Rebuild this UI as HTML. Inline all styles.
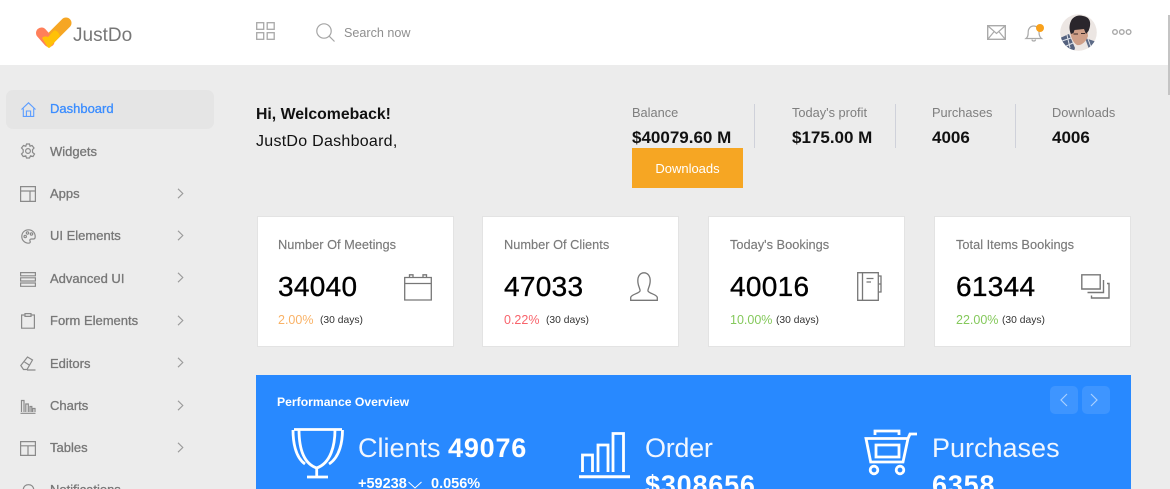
<!DOCTYPE html>
<html style="width:1170px;height:489px;overflow:hidden"><head><meta charset="utf-8">
<style>
html,body{margin:0;padding:0}
body{width:1170px;height:489px;overflow:hidden;background:#ececec;position:relative;font-family:"Liberation Sans",sans-serif;color:#000}
#r{position:absolute;left:0;top:0;width:1170px;height:489px;overflow:hidden;background:#ececec}
.a{position:absolute;white-space:nowrap}
svg{position:absolute;overflow:visible}
.m{left:50px;font-size:13px;color:#777;line-height:16px;-webkit-text-stroke:.3px #777}
.card{position:absolute;top:216px;width:195px;height:129px;background:#fff;border:1px solid #e3e3e3}
.ct{font-size:12.8px;color:#7a7a7a;line-height:16px;-webkit-text-stroke:.15px #7a7a7a}
.num{font-size:28px;color:#000;line-height:32px;letter-spacing:.3px;-webkit-text-stroke:.35px #000}
.pct{font-size:12.5px;line-height:16px}
.d{font-size:10.3px;color:#333;line-height:16px}
.sl{font-size:12.8px;color:#7e7e7e;line-height:16px}
.sv{font-size:17px;font-weight:700;line-height:20px;color:#111}
.big{font-size:27px;color:#f0f6ff;line-height:32px}
.i{fill:none;stroke:#8a8a8a;stroke-width:1.2}
.ch{fill:none;stroke:#9a9a9a;stroke-width:1.1}
.ci{fill:none;stroke:#777;stroke-width:1.3}
.w{fill:none;stroke:#fff;stroke-width:2.8}
</style></head><body><div id="r">

<!-- header -->
<div class="a" style="left:0;top:0;width:1170px;height:65px;background:#fff"></div>
<svg style="left:0;top:0" width="100" height="60">
<path d="M52 37L66 23" stroke="#f6a623" stroke-width="11" stroke-linecap="round" fill="none"/>
<path d="M41.5 33L49 41.5" stroke="#ff7f5a" stroke-width="11" stroke-linecap="round" fill="none"/>
<path d="M42 38C44 36 46 36 48 37L54 30.5C57 30 59 33 60 36L50.5 47C49.5 48.2 48.5 48.2 47.5 47Z" fill="#ffc107"/>
</svg>
<div class="a" style="left:73px;top:24px;font-size:19px;color:#777;line-height:24px">JustDo</div>
<svg style="left:256px;top:22px" width="20" height="19"><g fill="none" stroke="#a8a8a8" stroke-width="1.3"><rect x=".7" y=".7" width="7" height="6.6"/><rect x="11.2" y=".7" width="7" height="6.6"/><rect x=".7" y="10.7" width="7" height="6.6"/><rect x="11.2" y="10.7" width="7" height="6.6"/></g></svg>
<svg style="left:316px;top:23px" width="20" height="19"><circle cx="8" cy="8" r="7.2" fill="none" stroke="#a5a5a5" stroke-width="1.2"/><path d="M13.2 13.2L18.5 18.5" stroke="#a5a5a5" stroke-width="1.2"/></svg>
<div class="a" style="left:344px;top:25px;font-size:12.6px;color:#8f8f8f;line-height:16px">Search now</div>

<svg style="left:987px;top:25px" width="19" height="15"><rect x=".7" y=".7" width="17.6" height="13.6" fill="none" stroke="#aaa" stroke-width="1.4"/><path d="M1 1L9.5 8.5L18 1M1 14L7 6.8M18 14L12 6.8" fill="none" stroke="#aaa" stroke-width="1.2"/></svg>
<svg style="left:1025px;top:24px" width="18" height="18"><path d="M1 14.5C3 13 3.2 11 3.2 8C3.2 4.5 5.5 2 8.7 2C12 2 14 4.5 14 8C14 11 14.5 13 16.5 14.5Z" fill="none" stroke="#aaa" stroke-width="1.2"/><path d="M7 15.5C7 17.5 10.5 17.5 10.5 15.5" fill="none" stroke="#aaa" stroke-width="1.2"/></svg>
<div class="a" style="left:1036px;top:24px;width:8px;height:8px;border-radius:50%;background:#f9a11b"></div>
<svg style="left:1060px;top:14px" width="37" height="37" viewBox="0 0 37 37">
<defs><clipPath id="c"><circle cx="18.5" cy="18.5" r="18.3"/></clipPath></defs>
<g clip-path="url(#c)"><rect width="37" height="37" fill="#ece6e3"/>
<path d="M0 24L9 20L15 34L14 37H0Z" fill="#54617e"/>
<path d="M25 24L37 28V33L29 35Z" fill="#5c6a86"/>
<path d="M2 27L11 24M4 33L13 29M7 21L10 34M28 25L31 33" stroke="#dfe3ea" stroke-width="1" fill="none"/>
<path d="M10 15L27 14L28 22C26 28 21 32 17 31C13 29 10 22 10 15Z" fill="#cf9f88"/>
<path d="M11 20L13.5 19L14.5 16L24 15L26 20L28.5 17C32 9 30 3 23 2C17 0 12 4 11 7C9 11 9 16 11 20Z" fill="#2a262c"/>
<path d="M13.5 20H18M21 19.5H25" stroke="#3a2a28" stroke-width="1"/>
</g></svg>
<svg style="left:1112px;top:28px" width="20" height="8"><g fill="none" stroke="#a8a8a8" stroke-width="1.4"><circle cx="3" cy="4" r="2.3"/><circle cx="9.8" cy="4" r="2.3"/><circle cx="16.6" cy="4" r="2.3"/></g></svg>

<!-- scrollbar -->
<div class="a" style="left:1168px;top:15px;width:2px;height:80px;background:#c4c4c4"></div>

<!-- sidebar -->
<div class="a" style="left:6px;top:90px;width:208px;height:39px;background:#e5e5e5;border-radius:7px"></div>
<svg style="left:21px;top:102px" width="15" height="15"><path d="M.5 7.5L7.5 .8L14.5 7.5M2.3 6.5V14.4H12.7V6.5M5.4 14.4V9H9.6V14.4" fill="none" stroke="#5c9dff" stroke-width="1.1"/></svg>
<div class="a m" style="top:101px;color:#3b8dff;-webkit-text-stroke:.3px #3b8dff">Dashboard</div>

<svg style="left:20px;top:143px" width="16" height="16" viewBox="0 0 16 16"><path d="M6.5 1H9.5L10 3.2L12 2.5L14 5L12.5 6.7V9.3L14.5 11L13 13.5L10.5 12.8L9.5 15H6.5L5.8 12.8L3.2 13.5L1.5 11L3.2 9.3V6.7L1.5 5L3.5 2.5L5.8 3.2Z" class="i"/><circle cx="8" cy="8" r="2.4" class="i"/></svg>
<div class="a m" style="top:144px">Widgets</div>

<svg style="left:20px;top:186px" width="16" height="16"><path d="M.6.6H15.4V15.4H.6ZM.6 5H15.4M10 5V15.4" class="i"/></svg>
<div class="a m" style="top:186px">Apps</div>
<svg style="left:177px;top:188px" width="7" height="11"><path d="M1 .8L5.8 5.5L1 10.2" class="ch"/></svg>

<svg style="left:21px;top:229px" width="15" height="15"><path d="M7.5 .8C3.5.8.8 3.8.8 7.5C.8 11.5 4 14.2 7.5 14.2C9.5 14.2 9.5 12.8 9 12C8.4 10.8 9.2 10 10.5 10H12.5C13.8 10 14.2 8.8 14.2 7.5C14.2 3.8 11.5.8 7.5.8Z" class="i"/><circle cx="4.2" cy="7.5" r="1.2" class="i"/><circle cx="6.5" cy="4" r="1.2" class="i"/><circle cx="10.5" cy="5" r="1.2" class="i"/></svg>
<div class="a m" style="top:228px">UI Elements</div>
<svg style="left:177px;top:230px" width="7" height="11"><path d="M1 .8L5.8 5.5L1 10.2" class="ch"/></svg>

<svg style="left:20px;top:272px" width="16" height="15"><path d="M.6.6H15.4V3.8H.6ZM.6 5.8H15.4V9H.6ZM.6 11H15.4V14.3H.6Z" class="i"/></svg>
<div class="a m" style="top:271px">Advanced UI</div>
<svg style="left:177px;top:272px" width="7" height="11"><path d="M1 .8L5.8 5.5L1 10.2" class="ch"/></svg>

<svg style="left:21px;top:313px" width="14" height="16"><path d="M4 2H.6V15.2H13.4V2H10M4 .6H10V3.4H4Z" class="i"/></svg>
<div class="a m" style="top:313px">Form Elements</div>
<svg style="left:177px;top:315px" width="7" height="11"><path d="M1 .8L5.8 5.5L1 10.2" class="ch"/></svg>

<svg style="left:20px;top:356px" width="16" height="15"><path d="M.8 9.5L7.5 1L12.5 4L7 13.5H3.5ZM4.5 6L10 9.5M7 14H15.5" class="i"/></svg>
<div class="a m" style="top:356px">Editors</div>
<svg style="left:177px;top:357px" width="7" height="11"><path d="M1 .8L5.8 5.5L1 10.2" class="ch"/></svg>

<svg style="left:20px;top:399px" width="16" height="15"><path d="M1.5 13V1.5H4V13M5.8 13V5H8.3V13M10 13V7.5H11.8V13M12.8 13V9.5H15V13M.5 14.3H15.5" class="i"/></svg>
<div class="a m" style="top:398px">Charts</div>
<svg style="left:177px;top:400px" width="7" height="11"><path d="M1 .8L5.8 5.5L1 10.2" class="ch"/></svg>

<svg style="left:20px;top:441px" width="16" height="15"><path d="M.6.6H15.4V14.4H.6ZM.6 4.8H15.4M8 4.8V14.4" class="i"/></svg>
<div class="a m" style="top:440px">Tables</div>
<svg style="left:177px;top:442px" width="7" height="11"><path d="M1 .8L5.8 5.5L1 10.2" class="ch"/></svg>

<svg style="left:22px;top:484px" width="13" height="8"><path d="M1 8C1 3 3 .7 6.5 .7C10 .7 12 3 12 8" class="i"/></svg>
<div class="a m" style="top:482px">Notifications</div>

<!-- welcome -->
<div class="a" style="left:256px;top:105px;font-size:15.8px;font-weight:700;color:#111;line-height:20px">Hi, Welcomeback!</div>
<div class="a" style="left:256px;top:132px;font-size:16px;color:#111;line-height:20px;letter-spacing:.27px">JustDo Dashboard,</div>

<!-- stats -->
<div class="a sl" style="left:632px;top:105px">Balance</div>
<div class="a sv" style="left:632px;top:128px">$40079.60 M</div>
<div class="a" style="left:754px;top:104px;width:1px;height:44px;background:#cfd1da"></div>
<div class="a sl" style="left:792px;top:105px">Today's profit</div>
<div class="a sv" style="left:792px;top:128px">$175.00 M</div>
<div class="a" style="left:895px;top:104px;width:1px;height:44px;background:#cfd1da"></div>
<div class="a sl" style="left:932px;top:105px">Purchases</div>
<div class="a sv" style="left:932px;top:128px">4006</div>
<div class="a" style="left:1015px;top:104px;width:1px;height:44px;background:#cfd1da"></div>
<div class="a sl" style="left:1052px;top:105px">Downloads</div>
<div class="a sv" style="left:1052px;top:128px">4006</div>
<div class="a" style="left:632px;top:148px;width:111px;height:40px;background:#f6a623;color:#fff;font-size:13px;line-height:41px;text-align:center">Downloads</div>

<!-- cards -->
<div class="card" style="left:257px"></div>
<div class="card" style="left:482px"></div>
<div class="card" style="left:708px"></div>
<div class="card" style="left:934px"></div>

<div class="a ct" style="left:278px;top:237px">Number Of Meetings</div>
<div class="a num" style="left:278px;top:271px">34040</div>
<div class="a pct" style="left:278px;top:312px;color:#f9b266">2.00%</div>
<div class="a d" style="left:320px;top:313px">(30 days)</div>
<svg style="left:404px;top:274px" width="28" height="27"><path d="M.7 3.5H27.3V26H.7ZM.7 9.5H27.3M5.5 3.5V.8H9V3.5M19 3.5V.8H22.5V3.5" class="ci"/></svg>

<div class="a ct" style="left:504px;top:237px">Number Of Clients</div>
<div class="a num" style="left:504px;top:271px">47033</div>
<div class="a pct" style="left:504px;top:312px;color:#f8646c">0.22%</div>
<div class="a d" style="left:546px;top:313px">(30 days)</div>
<svg style="left:630px;top:272px" width="28" height="29"><path d="M.7 28.3V25.5C1 22.5 9 21.5 10 19C10.5 17.5 8.5 15 8 11C7 4 10.5.8 14 .8C17.5.8 21 4 20 11C19.5 15 17.5 17.5 18 19C19 21.5 27 22.5 27.3 25.5V28.3Z" class="ci"/></svg>

<div class="a ct" style="left:730px;top:237px">Today's Bookings</div>
<div class="a num" style="left:730px;top:271px">40016</div>
<div class="a pct" style="left:730px;top:312px;color:#85c95c">10.00%</div>
<div class="a d" style="left:776px;top:313px">(30 days)</div>
<svg style="left:857px;top:272px" width="25" height="29"><path d="M.7.7H21.3V28.3H.7ZM5.5.7V28.3M9.5 6.5H16.5M9.5 10H14M21.3 4H24V12H21.3M21.3 12H24V20H21.3" class="ci"/></svg>

<div class="a ct" style="left:956px;top:237px">Total Items Bookings</div>
<div class="a num" style="left:956px;top:271px">61344</div>
<div class="a pct" style="left:956px;top:312px;color:#85c95c">22.00%</div>
<div class="a d" style="left:1002px;top:313px">(30 days)</div>
<svg style="left:1081px;top:274px" width="29" height="25"><path d="M.8.8H19.2V15H.8ZM22.5 6V18.5H6.5M26 9.5H28V24H10.5V21.5" fill="none" stroke="#777" stroke-width="1.4"/></svg>

<!-- performance -->
<div class="a" style="left:256px;top:375px;width:875px;height:114px;background:#2889ff"></div>
<div class="a" style="left:277px;top:394px;font-size:12.2px;font-weight:700;color:#fff;line-height:16px">Performance Overview</div>
<div class="a" style="left:1050px;top:386px;width:28px;height:28px;background:#3e95ff;border-radius:5px"></div>
<div class="a" style="left:1082px;top:386px;width:28px;height:28px;background:#3e95ff;border-radius:5px"></div>
<svg style="left:1050px;top:386px" width="60" height="28"><path d="M17 8L11 14L17 20M41 8L47 14L41 20" fill="none" stroke="#a9d0ff" stroke-width="1.2"/></svg>

<svg style="left:291px;top:427px" width="53" height="52" viewBox="0 0 53 52">
<path d="M3 2.5H51M8 2.5C8 18 11 36 25.7 41C40 36 44 18 44 2.5M2 3C2 14 4 30 14 37M51.5 3C51.5 14 49 30 38 37" class="w"/>
<path d="M25.7 41V50M16 50H37" class="w"/></svg>
<div class="a big" style="left:358px;top:432px">Clients <span style="font-weight:700;letter-spacing:.8px;color:#fff">49076</span></div>
<div class="a" style="left:358px;top:475px;font-size:14.5px;color:#fff;font-weight:700;line-height:18px">+59238</div>
<svg style="left:408px;top:481px" width="14" height="8"><path d="M.5 1L7 7L13.5 1" fill="none" stroke="#fff" stroke-width="1"/></svg>
<div class="a" style="left:431px;top:475px;font-size:14.5px;color:#fff;font-weight:700;line-height:18px">0.056%</div>

<svg style="left:579px;top:432px" width="52" height="47" viewBox="0 0 52 47"><path d="M3.5 40V23H13.5V40M19 40V13H29V40M34 40V1.5H44.5V40" class="w"/><path d="M0 44.7H51" stroke="#fff" stroke-width="3"/></svg>
<div class="a big" style="left:645px;top:432px;letter-spacing:-.3px">Order</div>
<div class="a big" style="left:645px;top:469px;font-weight:700;letter-spacing:.8px;color:#fff">$308656</div>

<svg style="left:866px;top:429px" width="52" height="47" viewBox="0 0 52 47"><path d="M0 9.5H42L37 33H4.7ZM9 6V2H33V6M10 16H33V28H10Z" class="w"/><path d="M42 9.5L44 5H51" class="w"/><circle cx="8" cy="41" r="3.8" class="w"/><circle cx="34" cy="41" r="3.8" class="w"/></svg>
<div class="a big" style="left:932px;top:432px">Purchases</div>
<div class="a big" style="left:932px;top:469px;font-weight:700;letter-spacing:.8px;color:#fff">6358</div>
</div></body></html>
